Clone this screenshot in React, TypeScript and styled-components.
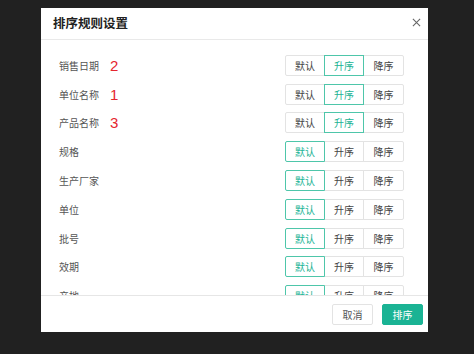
import React, { useState } from 'react';
import styled, { createGlobalStyle } from 'styled-components';

const GlobalStyle = createGlobalStyle`
  html, body {
    margin: 0;
    padding: 0;
    background: #212121;
    font-family: 'Noto Sans CJK SC', 'Noto Sans', sans-serif;
  }
`;

const Page = styled.div`
  width: 474px;
  height: 354px;
  padding: 8px 0 0 41px;
  box-sizing: border-box;
`;

const Modal = styled.div`
  width: 387px;
  height: 324px;
  background: #fff;
  display: flex;
  flex-direction: column;
  overflow: hidden;
`;

const Header = styled.div`
  height: 32px;
  flex: none;
  display: flex;
  align-items: center;
  justify-content: space-between;
  padding: 0 4px 3px 12px;
  box-sizing: border-box;
  border-bottom: 1px solid #e9e9e9;
`;

const Title = styled.div`
  font-size: 12.5px;
  font-weight: 700;
  color: #222;
`;

const CloseBtn = styled.button`
  width: 16px;
  height: 16px;
  padding: 0;
  border: 0;
  background: none;
  display: flex;
  align-items: center;
  justify-content: center;
  cursor: pointer;
`;

const Body = styled.div`
  flex: 1;
  overflow: hidden;
  padding: 11px 24px 0 18px;
`;

const Row = styled.div`
  height: 28.8px;
  display: flex;
  align-items: center;
  justify-content: space-between;
`;

const Label = styled.div`
  display: flex;
  align-items: center;
  font-size: 10px;
  color: #555;
`;

const Index = styled.span`
  margin-left: 11px;
  font-size: 15px;
  color: #e5262f;
  font-family: 'Liberation Sans', sans-serif;
  line-height: 1;
`;

const Group = styled.div`
  display: flex;
`;

const Seg = styled.button<{ active: boolean }>`
  width: 40px;
  height: 21px;
  padding: 0;
  margin-left: -1px;
  font-family: inherit;
  font-size: 10px;
  background: #fff;
  color: ${p => (p.active ? '#1ab394' : '#444')};
  border: 1px solid ${p => (p.active ? '#4ec6aa' : '#e3e3e3')};
  position: relative;
  z-index: ${p => (p.active ? 1 : 0)};
  cursor: pointer;
  &:first-child {
    margin-left: 0;
    border-radius: 2px 0 0 2px;
  }
  &:last-child {
    width: 41px;
    border-radius: 0 2px 2px 0;
  }
`;

const Footer = styled.div`
  height: 36px;
  flex: none;
  border-top: 1px solid #e6e6e6;
  display: flex;
  align-items: center;
  justify-content: flex-end;
  gap: 9px;
  padding: 0 5px 0 0;
`;

const FootBtn = styled.button<{ primary?: boolean }>`
  width: 41px;
  height: 21px;
  padding: 0;
  font-family: inherit;
  font-size: 10px;
  border-radius: 2px;
  border: 1px solid ${p => (p.primary ? '#1ab394' : '#e3e3e3')};
  background: ${p => (p.primary ? '#1ab394' : '#fff')};
  color: ${p => (p.primary ? '#fff' : '#555')};
  cursor: pointer;
`;

const OPTIONS = ['默认', '升序', '降序'];

const FIELDS: { name: string; order?: number; mode: number }[] = [
  { name: '销售日期', order: 2, mode: 1 },
  { name: '单位名称', order: 1, mode: 1 },
  { name: '产品名称', order: 3, mode: 1 },
  { name: '规格', mode: 0 },
  { name: '生产厂家', mode: 0 },
  { name: '单位', mode: 0 },
  { name: '批号', mode: 0 },
  { name: '效期', mode: 0 },
  { name: '产地', mode: 0 },
];

export default function App() {
  const [modes, setModes] = useState(FIELDS.map(f => f.mode));

  return (
    <Page>
      <GlobalStyle />
      <Modal>
        <Header>
          <Title>排序规则设置</Title>
          <CloseBtn>
            <svg width="9" height="9" viewBox="0 0 10 10">
              <path d="M1 1L9 9M9 1L1 9" stroke="#666" strokeWidth="1.2" />
            </svg>
          </CloseBtn>
        </Header>
        <Body>
          {FIELDS.map((f, i) => (
            <Row key={f.name}>
              <Label>
                {f.name}
                {f.order ? <Index>{f.order}</Index> : null}
              </Label>
              <Group>
                {OPTIONS.map((o, j) => (
                  <Seg
                    key={o}
                    active={modes[i] === j}
                    onClick={() => setModes(m => m.map((v, k) => (k === i ? j : v)))}
                  >
                    {o}
                  </Seg>
                ))}
              </Group>
            </Row>
          ))}
        </Body>
        <Footer>
          <FootBtn>取消</FootBtn>
          <FootBtn primary>排序</FootBtn>
        </Footer>
      </Modal>
    </Page>
  );
}
